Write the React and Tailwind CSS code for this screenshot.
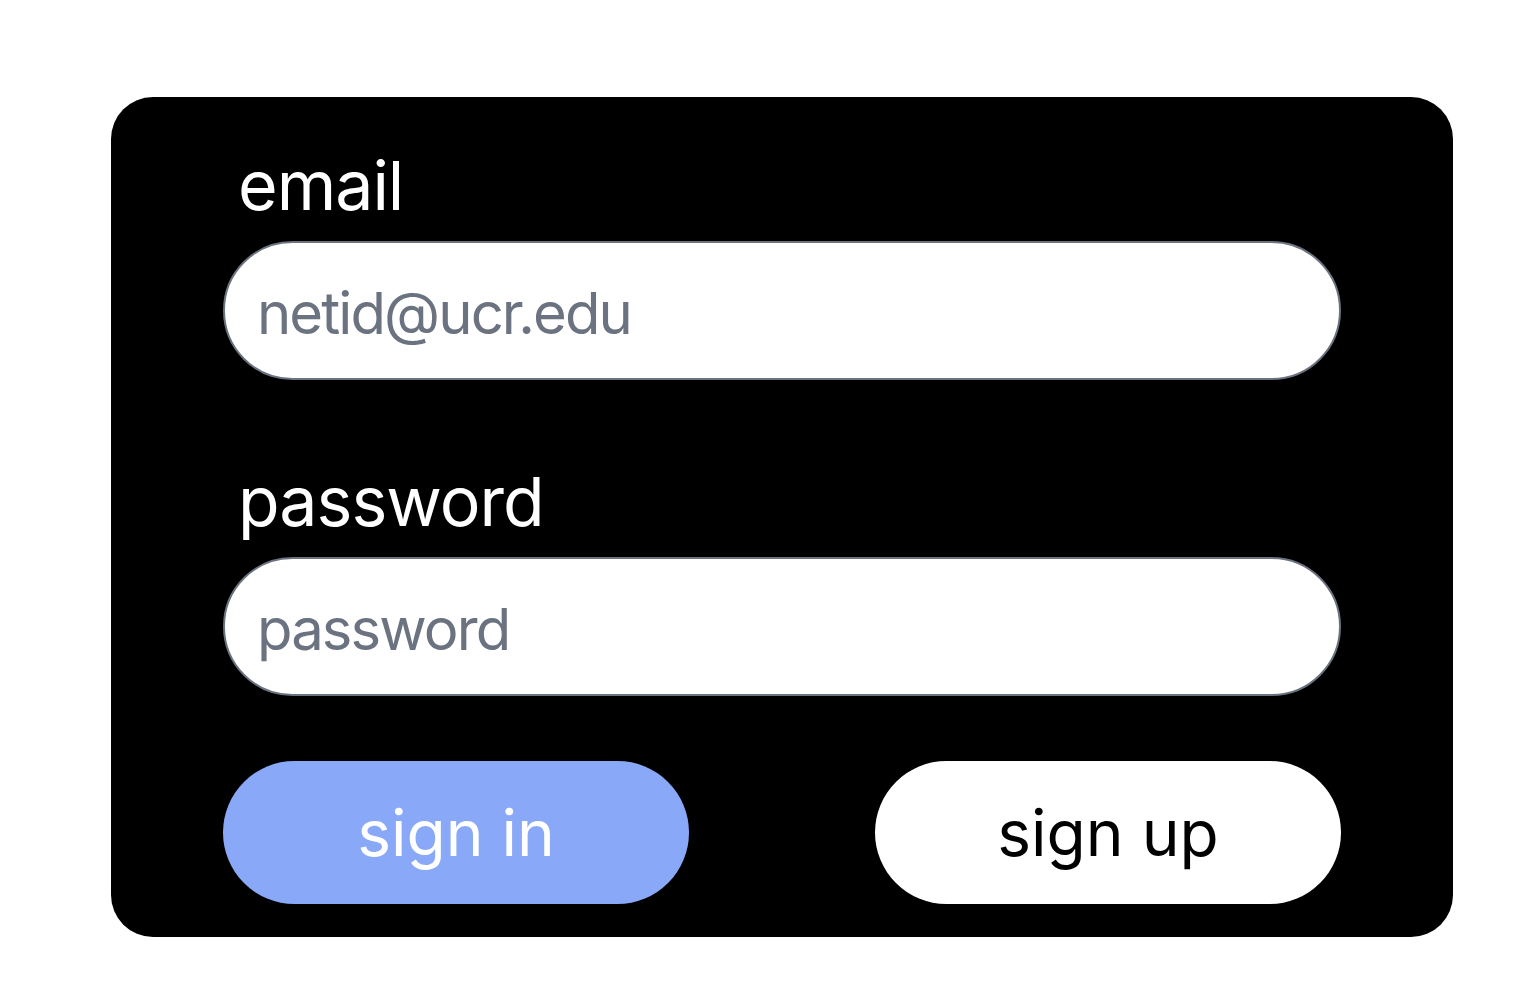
export default function App() {
  return (
    <div className="min-h-screen bg-white font-['Inter',sans-serif]">
      <div className="ml-[111px] pt-[97px]">
        <div className="w-[1342px] h-[840px] rounded-[42px] bg-black px-[112px] pt-[50px]">
          <label className="block pl-[15px] text-[68px] leading-[76px] text-white tracking-[-1px]">email</label>
          <input
            type="email"
            placeholder="netid@ucr.edu"
            className="mt-[18px] block w-full h-[139px] rounded-full border-2 border-[#6b7280] bg-white px-[32px] pt-[4px] text-[58px] tracking-[-1.9px] text-black placeholder:text-[#6b7280] outline-none"
          />

          <label className="mt-[83px] block pl-[15px] text-[68px] leading-[76px] text-white tracking-[-1px]">password</label>
          <input
            type="password"
            placeholder="password"
            className="mt-[18px] block w-full h-[139px] rounded-full border-2 border-[#6b7280] bg-white px-[32px] pt-[4px] text-[58px] tracking-[-1.9px] text-black placeholder:text-[#6b7280] outline-none"
          />

          <div className="mt-[65px] flex justify-between">
            <button className="w-[466px] h-[143px] rounded-full bg-[#89a9f8] text-[64px] text-white">
              sign in
            </button>
            <button className="w-[466px] h-[143px] rounded-full bg-white text-[64px] text-black">
              sign up
            </button>
          </div>
        </div>
      </div>
    </div>
  );
}
